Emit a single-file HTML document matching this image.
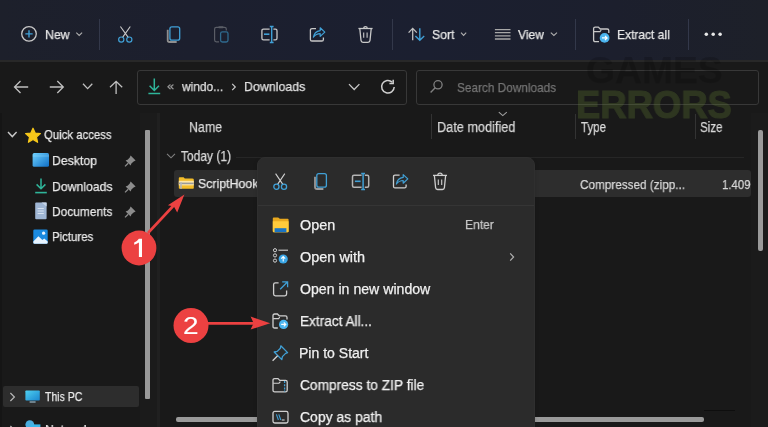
<!DOCTYPE html>
<html><head><meta charset="utf-8"><style>
html,body{margin:0;padding:0;width:768px;height:427px;overflow:hidden;background:#191919;}
body{position:relative;font-family:"Liberation Sans",sans-serif;}
.t{position:absolute;white-space:pre;line-height:1;transform-origin:0 0;-webkit-font-smoothing:antialiased;-webkit-text-stroke-width:0.25px;will-change:transform;}
#w{position:absolute;left:0;top:0;width:768px;height:427px;overflow:hidden;filter:blur(0.35px);}
.r{position:absolute;}
</style></head><body>
<div id="w"><div class="r" style="left:0px;top:0px;width:768px;height:60px;background:linear-gradient(90deg,#1d202b 0%,#1c1f2e 25%,#1b1f30 55%,#1c1f2d 80%,#1d2029 100%);"></div>
<div class="r" style="left:0px;top:60px;width:768px;height:2px;background:#282828;"></div>
<svg class="r" style="left:18px;top:22px;" width="24" height="24" viewBox="0 0 24 24"><circle cx="11" cy="11.85" r="7.3" fill="none" stroke="#c8c8c8" stroke-width="1.3"/><path d="M11 8.2V15.5M7.35 11.85H14.65" stroke="#40a0d6" stroke-width="1.4"/></svg>
<div class="t" style="left:45.02px;top:28.29px;font-size:13px;color:#e8e8e8;transform:scaleX(0.9471);">New</div>
<svg class="r" style="left:74px;top:30px;" width="10" height="8" viewBox="0 0 10 8"><path d="M2.3 2.6L5.2 5.4L8.1 2.6" fill="none" stroke="#b0b0b0" stroke-width="1.1"/></svg>
<div class="r" style="left:99px;top:19px;width:1px;height:31px;background:#33384a;"></div>
<svg class="r" style="left:114px;top:22px;" width="22" height="24" viewBox="0 0 22 24"><path d="M6.4 4.5L14.2 15.4M16.3 4.5L8.6 15.4" stroke="#c8c8c8" stroke-width="1.1"/><circle cx="7.25" cy="17.6" r="2.6" fill="none" stroke="#40a0d6" stroke-width="1.2"/><circle cx="15.3" cy="17.6" r="2.6" fill="none" stroke="#40a0d6" stroke-width="1.2"/></svg>
<svg class="r" style="left:162px;top:22px;" width="22" height="24" viewBox="0 0 22 24"><path d="M5.7 7.8V18.2Q5.7 20 7.5 20H14.7" fill="none" stroke="#8f8f8f" stroke-width="1.8"/><rect x="7.9" y="4.8" width="9.8" height="13.4" rx="2" fill="none" stroke="#40a0d6" stroke-width="1.3"/></svg>
<svg class="r" style="left:210px;top:22px;" width="22" height="24" viewBox="0 0 22 24"><path d="M9 19.8H6.3Q4.6 19.8 4.6 18.1V7Q4.6 5.3 6.3 5.3H14.6Q16.3 5.3 16.3 7V8.6" fill="none" stroke="#5a5d66" stroke-width="1.2"/><rect x="8.2" y="4.2" width="5.4" height="2" rx="1" fill="#5a5d66"/><rect x="10.6" y="9.8" width="7.4" height="10.2" rx="1.8" fill="none" stroke="#2f6a8e" stroke-width="1.3"/></svg>
<svg class="r" style="left:258px;top:22px;" width="24" height="24" viewBox="0 0 24 24"><path d="M11.6 7.1H5.5Q3.9 7.1 3.9 8.7V16.3Q3.9 17.9 5.5 17.9H11.6M15.4 7.1H17.4Q19 7.1 19 8.7V16.3Q19 17.9 17.4 17.9H15.4" fill="none" stroke="#c8c8c8" stroke-width="1.3"/><path d="M13.7 4.5V20.5M11.8 4.5H15.6M11.8 20.5H15.6" stroke="#40a0d6" stroke-width="1.4"/><path d="M6 12.2H11.4" stroke="#40a0d6" stroke-width="1.6"/></svg>
<svg class="r" style="left:306px;top:22px;" width="24" height="24" viewBox="0 0 24 24"><path d="M10 6.6H6Q4.4 6.6 4.4 8.2V17.4Q4.4 19 6 19H15.8Q17.4 19 17.4 17.4V15.4" fill="none" stroke="#c8c8c8" stroke-width="1.3"/><path d="M7.4 15.2Q8.2 9.6 14.2 8.6V5.8L18.8 10.1L14.2 14.4V11.7Q10.2 11.7 7.4 15.2Z" fill="none" stroke="#40a0d6" stroke-width="1.2" stroke-linejoin="round"/></svg>
<svg class="r" style="left:355px;top:22px;" width="22" height="24" viewBox="0 0 22 24"><path d="M3.4 6.5H17.6" stroke="#c8c8c8" stroke-width="1.3"/><path d="M8.8 6.2Q8.8 4.6 10.5 4.6Q12.2 4.6 12.2 6.2" fill="none" stroke="#c8c8c8" stroke-width="1.3"/><path d="M4.8 6.8L6 18.4Q6.2 20.3 8 20.3H13Q14.8 20.3 15 18.4L16.2 6.8" fill="none" stroke="#c8c8c8" stroke-width="1.3"/><path d="M8.7 10.5V15.8M12.1 10.5V15.8" stroke="#c8c8c8" stroke-width="1.1"/></svg>
<div class="r" style="left:392px;top:19px;width:1px;height:31px;background:#33384a;"></div>
<svg class="r" style="left:404px;top:22px;" width="24" height="24" viewBox="0 0 24 24"><path d="M8.7 6.4V18.3M4.6 10.6L8.7 6.4L12.8 10.6" fill="none" stroke="#c0c0c0" stroke-width="1.3"/><path d="M15.8 6.3V18.3M11.4 14L15.8 18.3L20.2 14" fill="none" stroke="#40a0d6" stroke-width="1.4"/></svg>
<div class="t" style="left:431.95px;top:28.29px;font-size:13px;color:#e8e8e8;transform:scaleX(0.9378);">Sort</div>
<svg class="r" style="left:459px;top:30px;" width="10" height="8" viewBox="0 0 10 8"><path d="M2 2.7L4.6 5.4L7.2 2.7" fill="none" stroke="#b0b0b0" stroke-width="1.1"/></svg>
<svg class="r" style="left:492px;top:22px;" width="22" height="24" viewBox="0 0 22 24"><path d="M2.9 7.6H18.5M2.9 10.7H18.5M2.9 13.8H18.5M2.9 17H18.5" stroke="#a8a8a8" stroke-width="1.3"/></svg>
<div class="t" style="left:518.44px;top:28.29px;font-size:13px;color:#e8e8e8;transform:scaleX(0.9288);">View</div>
<svg class="r" style="left:549px;top:30px;" width="10" height="8" viewBox="0 0 10 8"><path d="M1.8 2.7L4.9 5.4L8 2.7" fill="none" stroke="#b0b0b0" stroke-width="1.1"/></svg>
<div class="r" style="left:575px;top:19px;width:1px;height:31px;background:#33384a;"></div>
<svg class="r" style="left:590px;top:22px;" width="24" height="24" viewBox="0 0 24 24"><path d="M9 19.7H5.2Q3.6 19.7 3.6 18.1V6.6Q3.6 5.1 5.2 5.1H8.3L10.3 7H17.2Q18.8 7 18.8 8.6V11" fill="none" stroke="#c8c8c8" stroke-width="1.3"/><path d="M3.8 9.6H10L11.2 8" fill="none" stroke="#c8c8c8" stroke-width="1.1"/><circle cx="14.6" cy="15.9" r="4.9" fill="#4cb5ef"/><path d="M12 15.9H17M15 13.8L17.1 15.9L15 18" fill="none" stroke="#fff" stroke-width="1.2"/></svg>
<div class="t" style="left:616.84px;top:28.29px;font-size:13px;color:#e8e8e8;transform:scaleX(0.9242);">Extract all</div>
<div class="r" style="left:688px;top:19px;width:1px;height:31px;background:#33384a;"></div>
<svg class="r" style="left:702px;top:28px;" width="22" height="12" viewBox="0 0 22 12"><circle cx="4.3" cy="6.2" r="1.75" fill="#e8e8e8"/><circle cx="11.2" cy="6.2" r="1.75" fill="#e8e8e8"/><circle cx="18.1" cy="6.2" r="1.75" fill="#e8e8e8"/></svg>
<svg class="r" style="left:10px;top:77px;" width="22" height="20" viewBox="0 0 22 20"><path d="M4.5 10H18.2M10.5 4L4.5 10L10.5 16" fill="none" stroke="#c0c0c0" stroke-width="1.3"/></svg>
<svg class="r" style="left:46px;top:77px;" width="22" height="20" viewBox="0 0 22 20"><path d="M17.3 10H3.8M11.3 4L17.3 10L11.3 16" fill="none" stroke="#c0c0c0" stroke-width="1.3"/></svg>
<svg class="r" style="left:80px;top:80px;" width="16" height="14" viewBox="0 0 16 14"><path d="M3 3.8L7.6 8.6L12.3 3.8" fill="none" stroke="#c0c0c0" stroke-width="1.3"/></svg>
<svg class="r" style="left:106px;top:77px;" width="22" height="20" viewBox="0 0 22 20"><path d="M10.1 17V4.3M4 10.3L10.1 4.3L16.2 10.3" fill="none" stroke="#c0c0c0" stroke-width="1.3"/></svg>
<div class="r" style="left:137px;top:69.5px;width:269.5px;height:35px;background:transparent;border:1.6px solid #383838;border-radius:3px;box-sizing:border-box;"></div>
<svg class="r" style="left:144px;top:76px;" width="22" height="22" viewBox="0 0 22 22"><path d="M10.3 2.5V14.3M5.6 9.8L10.3 14.5L15 9.8" fill="none" stroke="#2fb59a" stroke-width="1.5"/><path d="M4.4 17.5H16.2" stroke="#2fb59a" stroke-width="1.5"/></svg>
<div class="t" style="left:167.49px;top:81.18px;font-size:11px;color:#a0a0a0;transform:scaleX(1.1483);">«</div>
<div class="t" style="left:181.80px;top:80.07px;font-size:13.5px;color:#e0e0e0;transform:scaleX(0.8831);">windo...</div>
<svg class="r" style="left:228px;top:80px;" width="12" height="14" viewBox="0 0 12 14"><path d="M4.2 3.8L7.3 7L4.2 10.2" fill="none" stroke="#c8c8c8" stroke-width="1.2"/></svg>
<div class="t" style="left:243.71px;top:80.07px;font-size:13.5px;color:#e0e0e0;transform:scaleX(0.9186);">Downloads</div>
<svg class="r" style="left:346px;top:80px;" width="16" height="14" viewBox="0 0 16 14"><path d="M3 4.1L8.2 9.5L13.4 4.1" fill="none" stroke="#c8c8c8" stroke-width="1.3"/></svg>
<svg class="r" style="left:378px;top:76px;" width="22" height="22" viewBox="0 0 22 22"><path d="M16.2 10.9A6.3 6.3 0 1 1 14.2 6.1" fill="none" stroke="#d0d0d0" stroke-width="1.5"/><path d="M15.2 3.8V7.6H11.4" fill="none" stroke="#d0d0d0" stroke-width="1.5"/></svg>
<div class="r" style="left:416.3px;top:69.5px;width:342.5px;height:35px;background:transparent;border:1.6px solid #383838;border-radius:3px;box-sizing:border-box;"></div>
<svg class="r" style="left:427px;top:78px;" width="20" height="18" viewBox="0 0 20 18"><circle cx="11" cy="6.8" r="4.1" fill="none" stroke="#808080" stroke-width="1.3"/><path d="M8.2 9.8L3.6 14.4" stroke="#808080" stroke-width="1.4"/></svg>
<div class="t" style="left:456.67px;top:80.77px;font-size:13.5px;color:#737373;transform:scaleX(0.8748);">Search Downloads</div>
<div class="r" style="left:140px;top:113px;width:17px;height:314px;background:#1b1b1b;"></div>
<div class="r" style="left:157px;top:113px;width:2.5px;height:314px;background:#202020;"></div>
<div class="r" style="left:145.2px;top:130px;width:5px;height:269px;background:#9a9a9a;border-radius:1px;"></div>
<svg class="r" style="left:5px;top:128px;" width="14" height="12" viewBox="0 0 14 12"><path d="M3 4L7.3 8.6L11.6 4" fill="none" stroke="#c8c8c8" stroke-width="1.4"/></svg>
<div class="r" style="left:0px;top:113px;width:2px;height:314px;background:#151515;"></div>
<svg class="r" style="left:24px;top:126px;" width="18" height="18" viewBox="0 0 18 18"><path d="M9 2.2L11.2 7L16.4 7.6L12.5 11.1L13.6 16.3L9 13.6L4.4 16.3L5.5 11.1L1.6 7.6L6.8 7Z" fill="#f7c81a" stroke="#f7c81a" stroke-width="1.2" stroke-linejoin="round"/></svg>
<div class="t" style="left:44.29px;top:127.77px;font-size:13.5px;color:#e8e8e8;transform:scaleX(0.8424);">Quick access</div>
<svg class="r" style="left:31px;top:151px;" width="20" height="18" viewBox="0 0 20 18"><defs><linearGradient id="dg" x1="0" y1="0" x2="1" y2="1"><stop offset="0" stop-color="#6fd2ff"/><stop offset="1" stop-color="#0f6fc6"/></linearGradient></defs><rect x="1.6" y="2" width="16.4" height="13.8" rx="1.5" fill="url(#dg)"/><path d="M1.6 5H18" stroke="#b8ecff" stroke-width="0.6" opacity="0.5"/></svg>
<div class="t" style="left:52.42px;top:154.07px;font-size:13.5px;color:#e8e8e8;transform:scaleX(0.9089);">Desktop</div>
<svg class="r" style="left:124px;top:154px;" width="13" height="13" viewBox="0 0 13 13"><path d="M6.6 1.6L11.6 6.6L9.6 7.4L7.4 9.6L6.6 11.6L1.6 6.6L3.6 5.8L5.8 3.6Z" fill="#8c8c8c"/><path d="M4.2 9.2L1 12.4" stroke="#8c8c8c" stroke-width="1.3"/></svg>
<svg class="r" style="left:33px;top:177px;" width="16" height="18" viewBox="0 0 16 18"><path d="M8 1.5V11.5M3.6 7.4L8 11.8L12.4 7.4" fill="none" stroke="#2fb59a" stroke-width="1.5"/><path d="M2.2 15.6H13.8" stroke="#2fb59a" stroke-width="1.6"/></svg>
<div class="t" style="left:52.42px;top:179.97px;font-size:13.5px;color:#e8e8e8;transform:scaleX(0.9064);">Downloads</div>
<svg class="r" style="left:124px;top:180px;" width="13" height="13" viewBox="0 0 13 13"><path d="M6.6 1.6L11.6 6.6L9.6 7.4L7.4 9.6L6.6 11.6L1.6 6.6L3.6 5.8L5.8 3.6Z" fill="#8c8c8c"/><path d="M4.2 9.2L1 12.4" stroke="#8c8c8c" stroke-width="1.3"/></svg>
<svg class="r" style="left:33px;top:201px;" width="16" height="20" viewBox="0 0 16 20"><rect x="2.2" y="1.6" width="11.4" height="16.6" rx="1" fill="#9fb6d4"/><path d="M4.6 7.5H10.8M4.6 10H10.8M4.6 12.5H10.8" stroke="#e6eef8" stroke-width="0.8"/><path d="M8.5 1.6H13.6V5.6" fill="#c8d6e8"/></svg>
<div class="t" style="left:52.44px;top:204.97px;font-size:13.5px;color:#e8e8e8;transform:scaleX(0.8853);">Documents</div>
<svg class="r" style="left:124px;top:205px;" width="13" height="13" viewBox="0 0 13 13"><path d="M6.6 1.6L11.6 6.6L9.6 7.4L7.4 9.6L6.6 11.6L1.6 6.6L3.6 5.8L5.8 3.6Z" fill="#8c8c8c"/><path d="M4.2 9.2L1 12.4" stroke="#8c8c8c" stroke-width="1.3"/></svg>
<svg class="r" style="left:32px;top:228px;" width="17" height="17" viewBox="0 0 17 17"><rect x="1.3" y="1.4" width="14.4" height="14.4" rx="1.3" fill="#1a8ae0"/><path d="M1.3 13.5L6.4 8.2L10.4 12L12.2 10.4L15.7 13.5V14.5Q15.7 15.8 14.4 15.8H2.6Q1.3 15.8 1.3 14.5Z" fill="#e8f4ff"/><circle cx="11.6" cy="5.2" r="1.6" fill="#e8f4ff"/></svg>
<div class="t" style="left:52.49px;top:230.17px;font-size:13.5px;color:#e8e8e8;transform:scaleX(0.8457);">Pictures</div>
<div class="r" style="left:2.6px;top:385.8px;width:136.5px;height:21.6px;background:#2d2d2d;border-radius:2px;"></div>
<svg class="r" style="left:6px;top:390px;" width="12" height="14" viewBox="0 0 12 14"><path d="M4.4 3L8.4 7L4.4 11" fill="none" stroke="#b8b8b8" stroke-width="1.2"/></svg>
<svg class="r" style="left:24px;top:388px;" width="18" height="17" viewBox="0 0 18 17"><defs><linearGradient id="pcg" x1="0" y1="0" x2="1" y2="1"><stop offset="0" stop-color="#4fd0f0"/><stop offset="1" stop-color="#1a86d0"/></linearGradient></defs><rect x="1.4" y="2.4" width="14.4" height="10.2" rx="0.8" fill="url(#pcg)"/><path d="M5.6 14H11.6" stroke="#9ab8c8" stroke-width="1.2"/></svg>
<div class="t" style="left:45.39px;top:390.27px;font-size:13.5px;color:#e8e8e8;transform:scaleX(0.7778);">This PC</div>
<svg class="r" style="left:6px;top:417px;" width="12" height="14" viewBox="0 0 12 14"><path d="M4.4 9L8.4 13L4.4 17" fill="none" stroke="#b8b8b8" stroke-width="1.2"/></svg>
<svg class="r" style="left:24px;top:418px;" width="18" height="12" viewBox="0 0 18 12"><circle cx="5.8" cy="6.6" r="4.4" fill="#4aaee0"/><rect x="6.4" y="6.4" width="10" height="6" fill="#3ab8ec"/></svg>
<div class="t" style="left:44.62px;top:422.77px;font-size:13.5px;color:#e8e8e8;transform:scaleX(0.9079);">Network</div>
<div class="t" style="left:188.61px;top:119.74px;font-size:14px;color:#d8d8d8;transform:scaleX(0.8858);">Name</div>
<div class="r" style="left:431px;top:114px;width:1px;height:25px;background:#333333;"></div>
<svg class="r" style="left:496px;top:110px;" width="14" height="8" viewBox="0 0 14 8"><path d="M2.8 2.2L6.8 5.6L10.8 2.2" fill="none" stroke="#a0a0a0" stroke-width="1.1"/></svg>
<div class="t" style="left:436.68px;top:119.74px;font-size:14px;color:#d8d8d8;transform:scaleX(0.9081);">Date modified</div>
<div class="r" style="left:575px;top:114px;width:1px;height:25px;background:#333333;"></div>
<div class="t" style="left:581.27px;top:119.74px;font-size:14px;color:#d8d8d8;transform:scaleX(0.8265);">Type</div>
<div class="r" style="left:695px;top:114px;width:1px;height:25px;background:#333333;"></div>
<div class="t" style="left:700.28px;top:119.74px;font-size:14px;color:#d8d8d8;transform:scaleX(0.8240);">Size</div>
<div class="r" style="left:751px;top:113px;width:17px;height:314px;background:#1b1b1b;"></div>
<div class="r" style="left:757.5px;top:130px;width:5.3px;height:121px;background:#9a9a9a;border-radius:2px;"></div>
<svg class="r" style="left:163px;top:148px;" width="16" height="16" viewBox="0 0 16 16"><path d="M4 5.8L8 9.8L12 5.8" fill="none" stroke="#808080" stroke-width="1.1"/></svg>
<div class="t" style="left:180.76px;top:149.14px;font-size:14px;color:#d8d8d8;transform:scaleX(0.8568);">Today (1)</div>
<div class="r" style="left:236px;top:157px;width:508px;height:1px;background:#262626;"></div>
<div class="r" style="left:174px;top:170px;width:577px;height:27px;background:#2d2d2d;border-radius:3px;"></div>
<svg class="r" style="left:177px;top:175px;" width="18" height="16" viewBox="0 0 18 16"><path d="M1.8 3.2Q1.8 2.3 2.7 2.3H6.6L7.8 3.5H15.2Q16.8 3.5 16.8 4.6V13Q16.8 13.8 16 13.8H2.6Q1.8 13.8 1.8 13Z" fill="#f4bd2a"/><rect x="1.8" y="5.8" width="15" height="4.6" fill="#fde7a8"/><rect x="1.8" y="7.6" width="15" height="1.6" fill="#9a9a9a"/><rect x="3.2" y="7" width="1.6" height="6.8" fill="#b8b8b8"/></svg>
<div class="t" style="left:197.64px;top:177.47px;font-size:13.5px;color:#e8e8e8;transform:scaleX(0.9150);">ScriptHookV</div>
<div class="t" style="left:580.41px;top:178.07px;font-size:13.5px;color:#d8d8d8;transform:scaleX(0.8699);">Compressed (zipp...</div>
<div class="t" style="left:721.55px;top:178.07px;font-size:13.5px;color:#d8d8d8;transform:scaleX(0.8434);">1.409</div>
<div class="r" style="left:176px;top:417px;width:528px;height:5px;background:#9a9a9a;border-radius:2px;"></div>
<div class="r" style="left:704px;top:410px;width:31px;height:1px;background:#0e0e0e;"></div>
<div class="r" style="left:256.5px;top:157.4px;width:278px;height:290px;background:#2b2b2b;border:1px solid #2f2f2f;border-radius:8px;box-sizing:border-box;box-shadow:0 2px 4px rgba(0,0,0,.15);"></div>
<div class="r" style="left:257.5px;top:205px;width:276px;height:1px;background:#353535;"></div>
<svg class="r" style="left:270px;top:170px;" width="20" height="22" viewBox="0 0 20 22"><path d="M5.6 3.6L13 14.6M14.8 3.6L7.4 14.6" stroke="#cfcfcf" stroke-width="1.1"/><circle cx="6.4" cy="16.8" r="2.6" fill="none" stroke="#40a0d6" stroke-width="1.3"/><circle cx="14" cy="16.8" r="2.6" fill="none" stroke="#40a0d6" stroke-width="1.3"/></svg>
<svg class="r" style="left:310px;top:170px;" width="20" height="22" viewBox="0 0 20 22"><path d="M5 6.8V17Q5 19 7 19H13.4" fill="none" stroke="#9a9a9a" stroke-width="1.8"/><rect x="6.8" y="3.6" width="9.6" height="13.6" rx="2" fill="none" stroke="#40a0d6" stroke-width="1.3"/></svg>
<svg class="r" style="left:349px;top:170px;" width="24" height="22" viewBox="0 0 24 22"><path d="M12.6 5.2H5Q3.5 5.2 3.5 6.7V15.7Q3.5 17.2 5 17.2H12.6M15.8 5.2H18.2Q19.7 5.2 19.7 6.7V15.7Q19.7 17.2 18.2 17.2H15.8" fill="none" stroke="#b4b4b4" stroke-width="1.5"/><path d="M14.1 3.6V19.2M12.2 3.4H16M12.2 19.4H16" stroke="#40a0d6" stroke-width="1.5"/><path d="M5.9 11.3H11.6" stroke="#40a0d6" stroke-width="1.6"/></svg>
<svg class="r" style="left:390px;top:170px;" width="22" height="22" viewBox="0 0 22 22"><path d="M9.6 5.2H5Q3.5 5.2 3.5 6.7V16.4Q3.5 17.9 5 17.9H14.6Q16.1 17.9 16.1 16.4V14.4" fill="none" stroke="#cfcfcf" stroke-width="1.3"/><path d="M6.4 14Q7.2 8.4 13.2 7.4V4.6L17.8 8.9L13.2 13.2V10.5Q9.2 10.5 6.4 14Z" fill="none" stroke="#40a0d6" stroke-width="1.2" stroke-linejoin="round"/></svg>
<svg class="r" style="left:430px;top:170px;" width="20" height="22" viewBox="0 0 20 22"><path d="M3 5.4H17" stroke="#cfcfcf" stroke-width="1.3"/><path d="M7.8 5.2Q7.8 3.2 10 3.2Q12.2 3.2 12.2 5.2" fill="none" stroke="#cfcfcf" stroke-width="1.2"/><path d="M4.4 5.8L5.6 17.6Q5.8 19.5 7.6 19.5H12.4Q14.2 19.5 14.4 17.6L15.6 5.8" fill="none" stroke="#cfcfcf" stroke-width="1.3"/><path d="M8.3 9.6V15M11.7 9.6V15" stroke="#cfcfcf" stroke-width="1.1"/></svg>
<svg class="r" style="left:270px;top:214px;" width="22" height="20" viewBox="0 0 22 20"><path d="M2.8 4.4Q2.8 3.4 3.8 3.4H8.2L9.8 4.8H17.6Q18.6 4.8 18.6 5.8V17.2Q18.6 18.2 17.6 18.2H3.8Q2.8 18.2 2.8 17.2Z" fill="#e9a91f"/><path d="M2.8 7.2H18.6V17.2Q18.6 18.2 17.6 18.2H3.8Q2.8 18.2 2.8 17.2Z" fill="#ffcb3c"/><rect x="4.6" y="14.2" width="11.8" height="4" fill="#1a74c4"/></svg>
<div class="t" style="left:299.95px;top:218.24px;font-size:14px;color:#f0f0f0;transform:scaleX(1.0278);">Open</div>
<div class="t" style="left:465.34px;top:217.99px;font-size:13px;color:#c8c8c8;transform:scaleX(0.9271);">Enter</div>
<svg class="r" style="left:270px;top:246px;" width="22" height="20" viewBox="0 0 22 20"><circle cx="5" cy="4.2" r="1.6" fill="none" stroke="#cfcfcf" stroke-width="1"/><circle cx="5" cy="9.4" r="1.6" fill="none" stroke="#cfcfcf" stroke-width="1"/><circle cx="5" cy="14.6" r="1.6" fill="none" stroke="#cfcfcf" stroke-width="1"/><path d="M8.4 4.2H18" stroke="#cfcfcf" stroke-width="1.1"/><circle cx="13.2" cy="13" r="4.6" fill="#3aa6e6"/><path d="M13.2 15.4V10.8M11.2 12.6L13.2 10.6L15.2 12.6" fill="none" stroke="#fff" stroke-width="1.1"/></svg>
<div class="t" style="left:299.95px;top:250.24px;font-size:14px;color:#f0f0f0;transform:scaleX(1.0332);">Open with</div>
<svg class="r" style="left:506px;top:250px;" width="12" height="14" viewBox="0 0 12 14"><path d="M4.2 3.4L7.6 7L4.2 10.6" fill="none" stroke="#b0b0b0" stroke-width="1.2"/></svg>
<svg class="r" style="left:270px;top:279px;" width="22" height="20" viewBox="0 0 22 20"><path d="M8.6 3.8H5.4Q3.6 3.8 3.6 5.6V15Q3.6 16.8 5.4 16.8H14.8Q16.6 16.8 16.6 15V11.6" fill="none" stroke="#cfcfcf" stroke-width="1.3"/><path d="M10.2 10.2L17.6 2.8M12.2 2.8H17.6V8.2" fill="none" stroke="#40a0d6" stroke-width="1.3"/></svg>
<div class="t" style="left:299.96px;top:282.34px;font-size:14px;color:#f0f0f0;transform:scaleX(1.0086);">Open in new window</div>
<svg class="r" style="left:270px;top:311px;" width="22" height="20" viewBox="0 0 22 20"><path d="M7.8 17H4.6Q3 17 3 15.4V4.6Q3 3 4.6 3H7.4L9.2 4.8H15.4Q17 4.8 17 6.4V8.6" fill="none" stroke="#cfcfcf" stroke-width="1.3"/><path d="M3.2 7.6H8.6L9.8 6.2" fill="none" stroke="#cfcfcf" stroke-width="1.1"/><circle cx="13.6" cy="13.4" r="4.6" fill="#4cb5ef"/><path d="M11.2 13.4H15.8M13.8 11.4L15.8 13.4L13.8 15.4" fill="none" stroke="#fff" stroke-width="1.1"/></svg>
<div class="t" style="left:299.51px;top:313.94px;font-size:14px;color:#f0f0f0;transform:scaleX(0.9724);">Extract All...</div>
<svg class="r" style="left:270px;top:343px;" width="22" height="20" viewBox="0 0 22 20"><path d="M10.8 2.8L17.6 9.6L15.6 10.4L12.4 13.6L11.8 16.6L4.2 9L7.2 8.4L10.4 5.2Z" fill="none" stroke="#40a0d6" stroke-width="1.3" stroke-linejoin="round"/><path d="M7.6 12.8L2.6 17.8" stroke="#cfcfcf" stroke-width="1.3"/></svg>
<div class="t" style="left:299.48px;top:345.84px;font-size:14px;color:#f0f0f0;transform:scaleX(1.0024);">Pin to Start</div>
<svg class="r" style="left:270px;top:375px;" width="22" height="20" viewBox="0 0 22 20"><path d="M4.6 3.6H8L9.8 5.4H15.6Q17.2 5.4 17.2 7V15.2Q17.2 16.8 15.6 16.8H4.6Q3 16.8 3 15.2V5.2Q3 3.6 4.6 3.6Z" fill="none" stroke="#cfcfcf" stroke-width="1.3"/><path d="M3.2 8.2H9L10.4 6.6" fill="none" stroke="#cfcfcf" stroke-width="1.1"/><path d="M14.6 6V16.6" stroke="#40a0d6" stroke-width="1.3" stroke-dasharray="2 1.2"/></svg>
<div class="t" style="left:299.91px;top:378.04px;font-size:14px;color:#f0f0f0;transform:scaleX(0.9814);">Compress to ZIP file</div>
<svg class="r" style="left:270px;top:407px;" width="22" height="20" viewBox="0 0 22 20"><rect x="3" y="4.4" width="15" height="11.6" rx="1.8" fill="none" stroke="#cfcfcf" stroke-width="1.3"/><path d="M6.4 7.4L8.4 13M8.8 7.4L10.8 13" stroke="#40a0d6" stroke-width="1.1"/><path d="M11.8 13H14.6" stroke="#cfcfcf" stroke-width="1.1"/></svg>
<div class="t" style="left:299.90px;top:410.34px;font-size:14px;color:#f0f0f0;transform:scaleX(0.9957);">Copy as path</div>
<svg class="r" style="left:0px;top:0px;" width="768" height="427" viewBox="0 0 768 427">
<path d="M148 233L176 203" stroke="#ec4141" stroke-width="2.6" />
<path d="M184.4 194.5L167.9 205.3L173.9 206.6L177.2 212.5Z" fill="#ec4141"/>
<circle cx="139" cy="248" r="17.4" fill="#ec4141"/>
<path d="M205 323.4H256" stroke="#ec4141" stroke-width="2.8"/>
<path d="M270.2 323.3L250.6 316.6L253.6 323.3L250.6 329.6Z" fill="#ec4141"/>
<circle cx="191" cy="325.5" r="17.5" fill="#ec4141"/>
</svg>
<svg class="r" style="left:0px;top:0px;" width="768" height="427" viewBox="0 0 768 427"><path d="M138.9 238.8H142V256.9H138.9V242.6Q136.8 244 134.2 244.7V242.6Q137.3 241.3 138.9 238.8Z" fill="#fff"/></svg>
<div class="t" style="left:183.00px;top:313.53px;font-size:24.4px;color:#fff;transform:scaleX(1.1439);-webkit-text-stroke:0.15px #fff;">2</div>
<div class="t" style="left:585.51px;top:52.81px;font-size:36px;color:#000;transform:scaleX(1.0353);font-weight:bold;opacity:0.17;">GAMES</div>
<div class="t" style="left:575.73px;top:84.67px;font-size:39px;color:#627d34;transform:scaleX(0.9341);font-weight:bold;-webkit-text-stroke:1.2px #627d34;opacity:0.3;">ERRORS</div>
</div></body></html>
